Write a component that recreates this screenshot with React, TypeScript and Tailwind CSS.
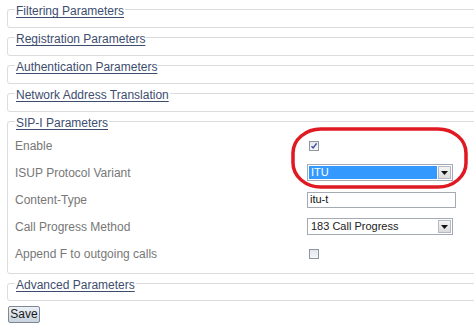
import React from 'react';

const font = { fontFamily: '"Liberation Sans", Arial, sans-serif' };

const collapsed = [
  'Filtering Parameters',
  'Registration Parameters',
  'Authentication Parameters',
  'Network Address Translation',
];

const Legend = ({ children }: { children: React.ReactNode }) => (
  <legend className="px-[1px] text-[12px] leading-[14px]">
    <span className="relative top-[2px] text-[#3d4d6e] underline underline-offset-[2px] decoration-[#3d4d6e]">{children}</span>
  </legend>
);

const Check = ({ checked }: { checked?: boolean }) => (
  <div className="w-[10px] h-[10px] border border-[#8f959e] bg-gradient-to-b from-[#e4e7ec] to-[#f6f7f9] flex items-center justify-center ml-[2px]">
    {checked && (
      <svg width="8" height="8" viewBox="0 0 8 8">
        <path d="M1.5 4.2 L3.2 6 L6.6 1.4" fill="none" stroke="#3b4fa0" strokeWidth="1.4" />
      </svg>
    )}
  </div>
);

const Arrow = () => (
  <div className="w-[13px] my-[1px] mr-[1px] border border-[#b5bac2] bg-gradient-to-b from-[#f4f4f4] to-[#dcdcdc] flex items-center justify-center">
    <svg width="7" height="4" viewBox="0 0 7 4">
      <path d="M0 0 H7 L3.5 4 Z" fill="#111" />
    </svg>
  </div>
);

const Select = ({ value, selected }: { value: string; selected?: boolean }) => (
  <div className="w-[146px] h-[17px] border border-[#a3aab4] bg-white flex items-stretch text-[11px] leading-none">
    <div className={`flex-1 flex items-center px-[2px] m-[1px] ${selected ? 'bg-[#3399ff] text-white' : 'text-[#222]'}`}>
      {value}
    </div>
    <Arrow />
  </div>
);

export default function App() {
  const rows: [string, React.ReactNode][] = [
    ['Enable', <Check checked />],
    ['ISUP Protocol Variant', <Select value="ITU" selected />],
    ['Content-Type', (
      <div className="w-[149px] h-[16px] border border-[#a3aab4] bg-white flex items-center px-[2px] text-[11px] text-[#111]">itu-t</div>
    )],
    ['Call Progress Method', <Select value="183 Call Progress" />],
    ['Append F to outgoing calls', <Check />],
  ];

  return (
    <div className="relative w-[474px] h-[331px] overflow-hidden bg-white" style={font}>
      <div className="pt-[2px] flex flex-col gap-[2px]">
        {collapsed.map(t => (
          <fieldset key={t} className="ml-[7px] w-[480px] border border-[#dcdcdc] rounded-[3px] pl-[7px] pb-[11px]">
            <Legend>{t}</Legend>
          </fieldset>
        ))}

        <fieldset className="ml-[7px] w-[480px] border border-[#dcdcdc] rounded-[3px] pl-[7px] pt-[4px] pb-[6px]">
          <Legend>SIP-I Parameters</Legend>
          {rows.map(([label, control]) => (
            <div key={label} className="grid grid-cols-[292px_1fr] h-[27px] items-center">
              <span className="text-[12px] text-[#777]">{label}</span>
              <div>{control}</div>
            </div>
          ))}
        </fieldset>

        <fieldset className="ml-[7px] w-[480px] border border-[#dcdcdc] rounded-[3px] pl-[7px] pb-[10px]">
          <Legend>Advanced Parameters</Legend>
        </fieldset>
      </div>

      <button className="ml-[8px] mt-[1px] w-[32px] h-[17px] border border-[#7d8896] rounded-[2px] bg-gradient-to-b from-[#eef2f6] to-[#c9d3de] text-[12px] leading-none text-[#1a1a1a]">
        Save
      </button>
      <div className="mt-[6px] border-t border-[#e6e6e6]" />

      {/* red annotation */}
      <svg className="absolute left-0 top-0 pointer-events-none" width="474" height="331">
        <rect x="293" y="129" width="173" height="58" rx="28" ry="24" fill="none" stroke="#e01a22" strokeWidth="3.5" />
      </svg>
    </div>
  );
}
